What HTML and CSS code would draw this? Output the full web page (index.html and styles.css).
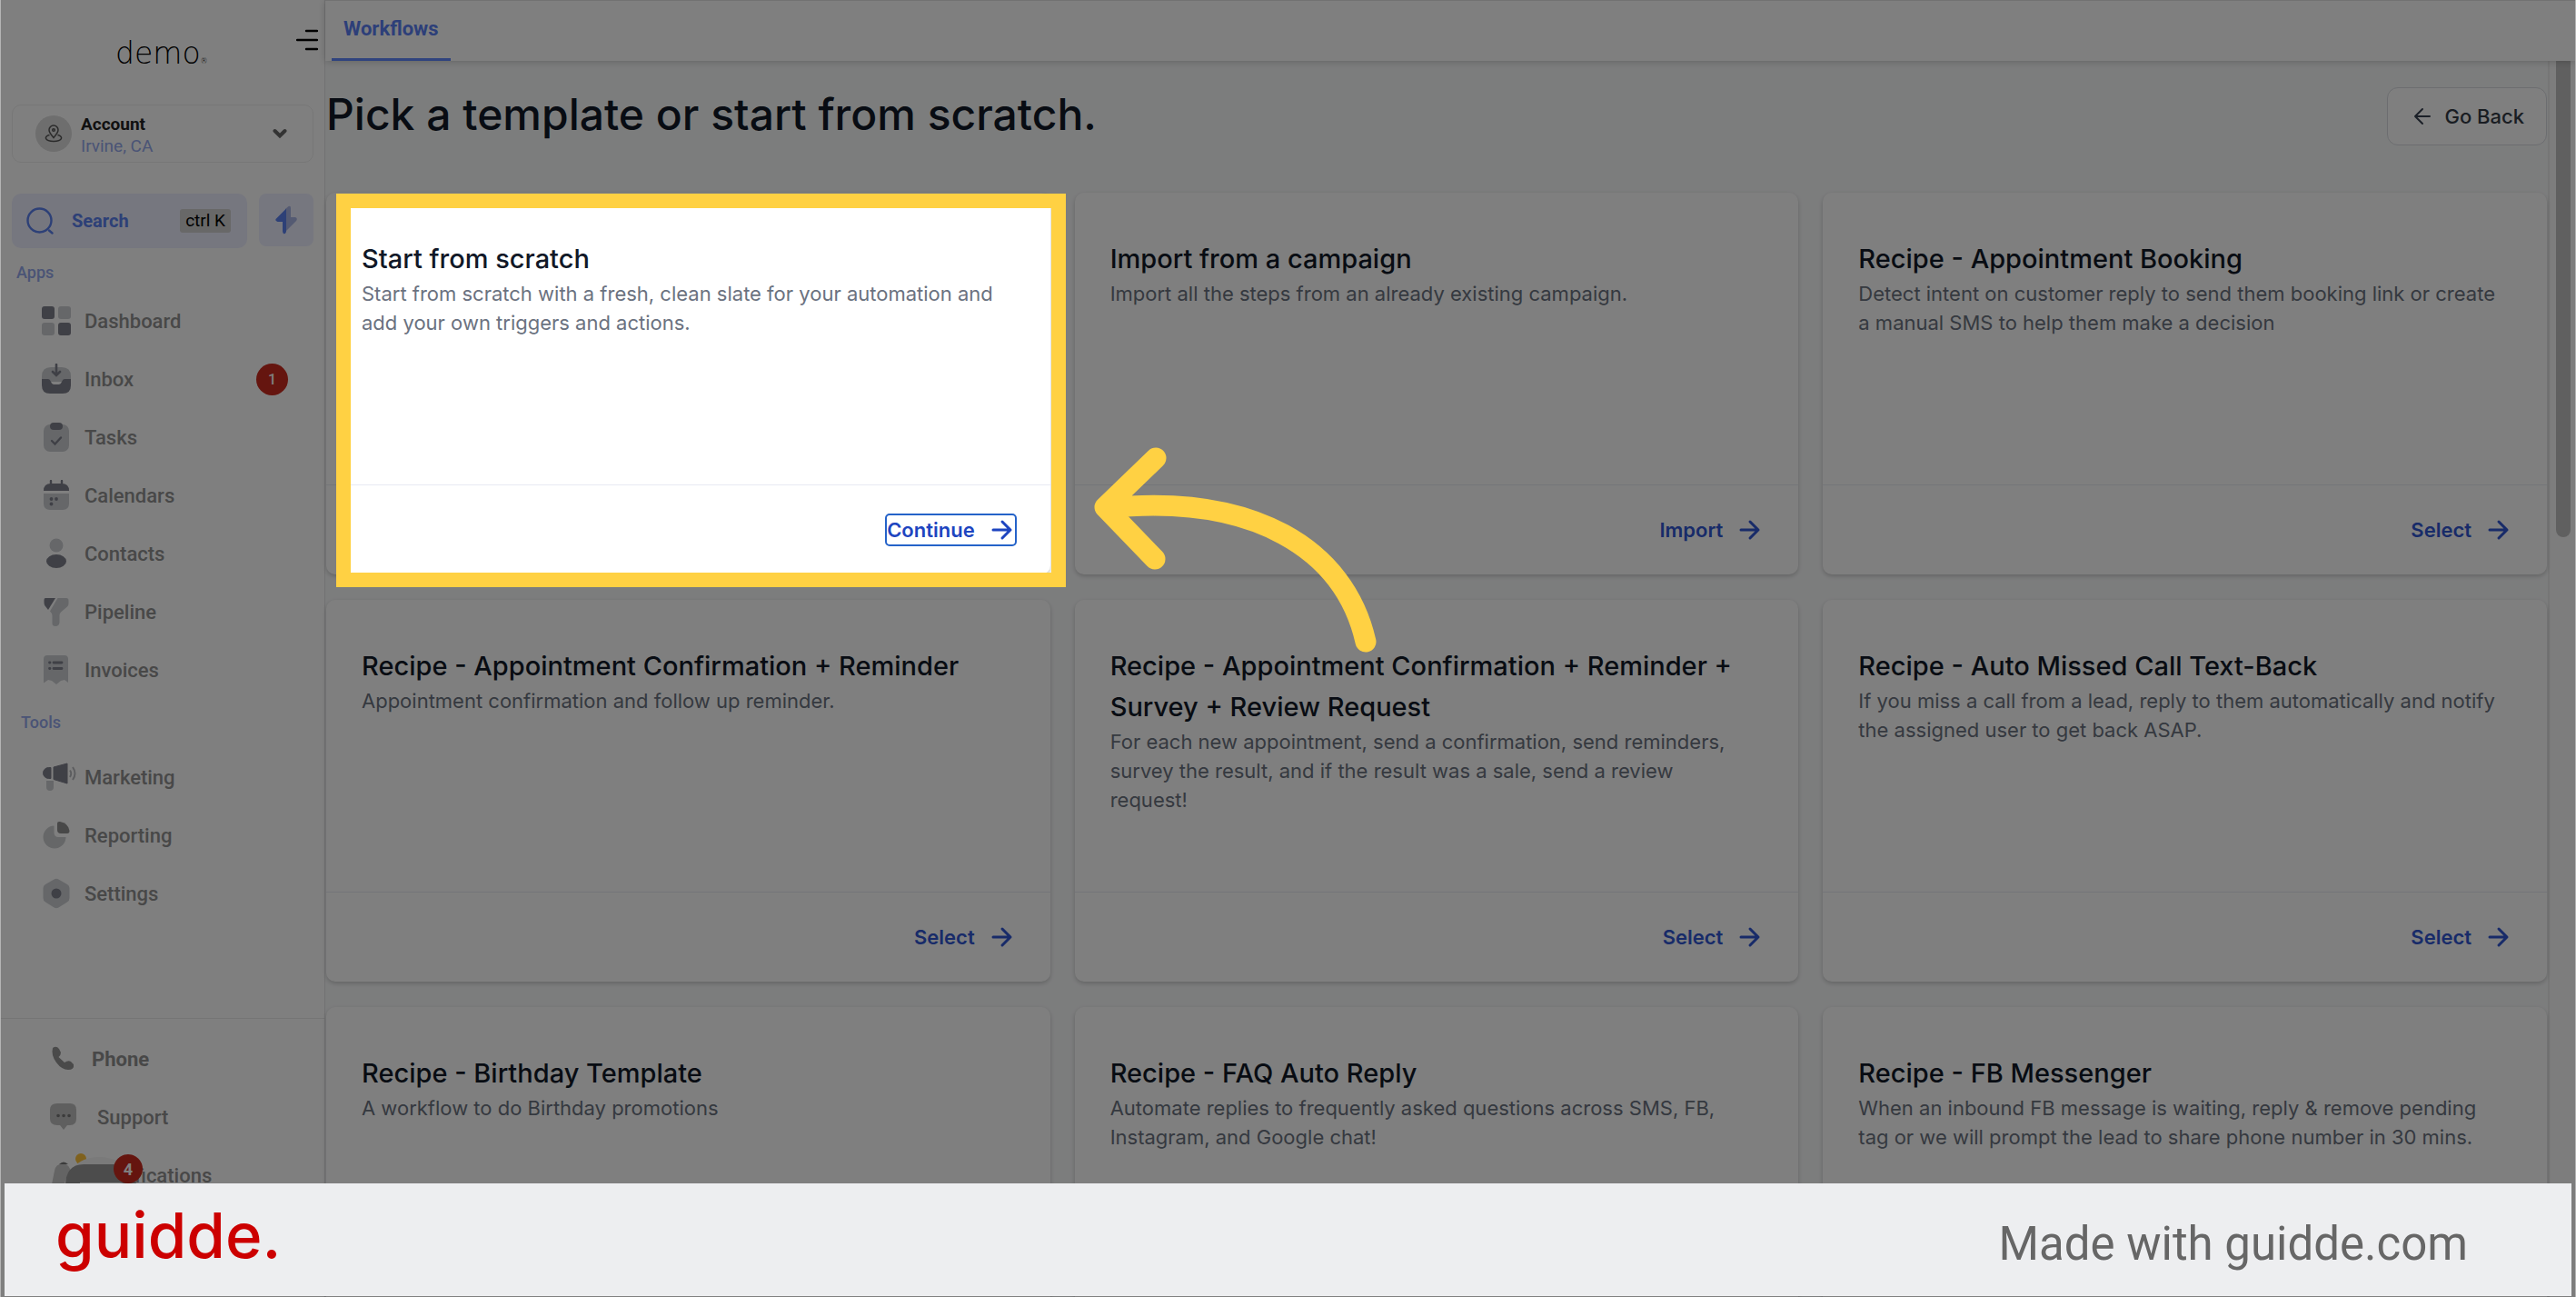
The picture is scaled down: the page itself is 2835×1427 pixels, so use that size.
FILE: index.html
```html
<!DOCTYPE html>
<html lang="en">
<head>
<meta charset="utf-8">
<meta name="viewport" content="width=device-width, initial-scale=1">
<title>Workflows</title>
<link rel="stylesheet" href="styles.css">
</head>
<body>
<svg class="sprite" aria-hidden="true">
  <symbol id="arrow-right" viewBox="0 0 30 32"><path d="M6 16H25M16 7L25 16L16 25" fill="none" stroke="currentColor" stroke-width="3" stroke-linecap="round" stroke-linejoin="round"/></symbol>
</svg>
<div class="app">
  <aside class="sidebar">
    <div class="brand">
      <span class="logo">demo<small>®</small></span>
      <button class="menu-toggle" aria-label="Toggle menu"><svg width="24" height="24" viewBox="0 0 24 24"><path d="M11 2H23M1 12H23M11 22H23" stroke="#000" stroke-width="2.4" stroke-linecap="round"/></svg></button>
    </div>
    <button class="account">
      <span class="avatar"><svg width="20" height="20" viewBox="0 0 20 20" fill="none" stroke="#555" stroke-width="1.5"><path d="M10 14.500C6.500 10.500 5 8.500 5 6a5 5 0 0 1 10 0c0 2.500-1.500 4.500-5 8.500z"/><circle cx="10" cy="6" r="1.300"/><path d="M5.500 11.500C-1 13 0 18.500 10 18.500S21 13 14.500 11.500"/></svg></span>
      <span class="account-text"><strong>Account</strong><span>Irvine, CA</span></span>
      <svg class="chevron" width="16" height="12" viewBox="0 0 16 12"><path d="M2.500 3L8 8.500L13.500 3" fill="none" stroke="#666" stroke-width="4" stroke-linecap="round"/></svg>
    </button>
    <div class="search-row">
      <button class="search"><svg width="30" height="30" viewBox="0 0 30 30" fill="none" stroke="#5a80ee" stroke-width="2.400" stroke-linecap="round"><circle cx="14.500" cy="14.500" r="13"/><path d="M25 25.500L28.500 28.500"/></svg><span>Search</span><kbd>ctrl K</kbd></button>
      <button class="quick" aria-label="Quick actions"><svg width="24" height="32" viewBox="0 0 24 32"><path d="M11 4L14.500 1Q17 0 17 3V13H22Q25 14 23 17L11 29z" fill="#a9b4e4"/><path d="M12 3.500V29Q11 32 9 31Q8 30 8 28V18H2.500Q-1 17 1 14.500z" fill="#5a80ee"/></svg></button>
    </div>
    <h2 class="group-label">Apps</h2>
    <nav class="nav" aria-label="Apps">
      <a href="#"><svg width="34" height="34" viewBox="0 0 34 34"><rect x="1" y="1" width="14" height="14" rx="3" fill="#7f808c"/><rect x="19" y="1" width="14" height="14" rx="3" fill="#cccfd3"/><rect x="1" y="19" width="14" height="14" rx="3" fill="#cccfd3"/><rect x="19" y="19" width="14" height="14" rx="3" fill="#7f808c"/></svg>Dashboard</a>
      <a href="#"><svg width="34" height="34" viewBox="0 0 34 34"><path d="M1 20V14Q1 4 11 4H23Q33 4 33 14V20z" fill="#cccfd3"/><path d="M1 17H8Q10 17 11 20Q12 23 14 23H20Q22 23 23 20Q24 17 26 17H33V24Q33 33 24 33H10Q1 33 1 24z" fill="#7f808c"/><path d="M17 1V12M13 9L17 13L21 9" fill="none" stroke="#7f808c" stroke-width="2.600" stroke-linecap="round"/></svg>Inbox<span class="count">1</span></a>
      <a href="#"><svg width="34" height="34" viewBox="0 0 34 34"><rect x="3" y="3" width="28" height="30" rx="7" fill="#cccfd3"/><rect x="10" y="1" width="14" height="8" rx="4" fill="#7f808c"/><path d="M12 21L15.500 24.500L22 17.500" fill="none" stroke="#7f808c" stroke-width="2.400" stroke-linecap="round"/></svg>Tasks</a>
      <a href="#"><svg width="34" height="34" viewBox="0 0 34 34"><path d="M3 15H31V26Q31 33 24 33H10Q3 33 3 26z" fill="#cccfd3"/><path d="M3 12Q3 4 11 4H23Q31 4 31 12z" fill="#7f808c"/><path d="M11 1V6M23 1V6" stroke="#7f808c" stroke-width="2.400" stroke-linecap="round"/><g fill="#7f808c"><circle cx="11.500" cy="21" r="1.900"/><circle cx="17" cy="21" r="1.900"/><circle cx="11.500" cy="26.500" r="1.900"/></g></svg>Calendars</a>
      <a href="#"><svg width="34" height="34" viewBox="0 0 34 34"><circle cx="17" cy="8" r="7.500" fill="#cccfd3"/><ellipse cx="17" cy="25.500" rx="11" ry="7.500" fill="#7f808c"/></svg>Contacts</a>
      <a href="#"><svg width="34" height="34" viewBox="0 0 34 34"><path d="M5 2H16L8 15L4.500 10.500Q3.500 9 3.500 7V4Q3.500 2 5 2z" fill="#7f808c"/><path d="M18.500 2H28Q30.500 2 30.500 4.500V8Q30.500 10 29 11.500L22 17.500Q20.500 19 20.500 21V29Q20 33 16 33Q12.500 33 12.500 30V21Q12.500 19 10 16.500z" fill="#cccfd3"/></svg>Pipeline</a>
      <a href="#"><svg width="34" height="34" viewBox="0 0 34 34"><path d="M3 5Q3 1 7 1H26Q30 1 30 5V31L26 28L22 29L17 33L12 29L8 28L3 31.500z" fill="#cccfd3"/><path d="M14 9H23M14 15.500H23M9.500 9H10M9.500 15.500H10" stroke="#7f808c" stroke-width="2.800" stroke-linecap="round"/></svg>Invoices</a>
    </nav>
    <h2 class="group-label tools">Tools</h2>
    <nav class="nav" aria-label="Tools">
      <a href="#"><svg width="42" height="34" viewBox="0 0 42 34"><path d="M11 6.500H8.500a6 6 0 0 0 0 12H11zM14 6L29 2V24L14 19.500z" fill="#7f808c" stroke="#7f808c" stroke-linejoin="round"/><path d="M6 21H14V28a4 4 0 0 1-8 0z" fill="#cccfd3"/><path d="M32 9.500Q34.500 13 32 17M35 6Q40 13 35 20" fill="none" stroke="#b9bbbf" stroke-width="2"/></svg>Marketing</a>
      <a href="#"><svg width="34" height="34" viewBox="0 0 34 34"><path d="M14.500 6.500V14Q14.500 19 19.500 19H27.500A12.500 12.500 0 1 1 14.500 6.500z" fill="#cccfd0"/><path d="M18 4Q18 1.500 21 2Q30 3.500 31.500 12Q31.500 15 29 15H22Q18 15 18 11z" fill="#909090"/></svg>Reporting</a>
      <a href="#"><svg width="34" height="34" viewBox="0 0 34 34"><path d="M14.500 1.500Q17 0 19.500 1.500L29 7Q31.500 8.500 31.500 11V22Q31.500 25 29 26.500L19.500 32.500Q17 34 14.500 32.500L5 26.500Q2.500 25 2.500 22V11Q2.500 8.500 5 7z" fill="#cccfd3"/><circle cx="17" cy="17" r="5.500" fill="#7f808c"/></svg>Settings</a>
    </nav>
    <nav class="nav nav-bottom" aria-label="Help">
      <a class="phone" href="#"><svg width="34" height="34" viewBox="0 0 34 34"><path d="M5 5Q9 2 12 6L14 10Q14 13 11.500 15L18 21Q22 18 25 20L28 23Q29 29 22 29Q15 29 9 21Q3 13 5 5z" fill="#949494"/></svg>Phone</a>
      <a class="wide" href="#"><svg width="34" height="34" viewBox="0 0 34 34"><path d="M10 2H24Q31 2 31 9V19Q31 26 24 26H21L17 31L13 26H10Q2 26 2 19V9Q2 2 10 2z" fill="#bfbfbf"/><path d="M11 15.500H11.100M17 15.500H17.100M23 15.500H23.100" stroke="#777" stroke-width="3.600" stroke-linecap="round"/></svg>Support</a>
      <a class="wide" href="#"><svg width="34" height="34" viewBox="0 0 34 34"><path d="M7 12Q8 5 16 4Q24 5 25 14L26 27H4z" fill="#c8c8c8"/><path d="M12 5Q17 0 22 5z" fill="#777"/></svg>Notifications</a>
      <svg class="chat" width="120" height="72" viewBox="0 0 120 72"><circle cx="39" cy="14" r="6" fill="#ffc23a"/><path d="M17 60Q22 12 59 12Q84 12 100 34V60z" fill="#f4f4f4"/><path d="M22 60V44Q22 20 42 20H82Q100 22 100 44V60H88V46Q88 40 82 40H38V60z" fill="#999"/></svg>
      <span class="count chat-count">4</span>
    </nav>
  </aside>

  <div class="main">
    <header class="topbar"><a class="tab" href="#">Workflows</a></header>
    <div class="viewport">
      <main class="content">
        <div class="heading">
          <h1>Pick a template or start from scratch.</h1>
          <button class="back"><svg width="20" height="20" viewBox="0 0 20 20" fill="none" stroke="#374151" stroke-width="2" stroke-linecap="round" stroke-linejoin="round"><path d="M18 10H2M10 2L2 10L10 18"/></svg>Go Back</button>
        </div>
        <div class="cards">
          <article class="card">
            <div class="card-body"><h3>Start from scratch</h3><p>Start from scratch with a fresh, clean slate for your automation and add your own triggers and actions.</p></div>
            <footer><button class="focused">Continue<svg><use href="#arrow-right"/></svg></button></footer>
            <div class="spotlight"></div>
            <svg class="pointer" width="320" height="232" viewBox="0 0 320 232" fill="none" stroke="#ffd143" stroke-width="23" stroke-linecap="round" stroke-linejoin="round"><path d="M72 16L16 70L71 127M17 71C180 54 280 116 303 218"/></svg>
          </article>
          <article class="card">
            <div class="card-body"><h3>Import from a campaign</h3><p>Import all the steps from an already existing campaign.</p></div>
            <footer><button>Import<svg><use href="#arrow-right"/></svg></button></footer>
          </article>
          <article class="card">
            <div class="card-body"><h3>Recipe - Appointment Booking</h3><p>Detect intent on customer reply to send them booking link or create a manual SMS to help them make a decision</p></div>
            <footer><button>Select<svg><use href="#arrow-right"/></svg></button></footer>
          </article>
          <article class="card">
            <div class="card-body"><h3>Recipe - Appointment Confirmation + Reminder</h3><p>Appointment confirmation and follow up reminder.</p></div>
            <footer><button>Select<svg><use href="#arrow-right"/></svg></button></footer>
          </article>
          <article class="card">
            <div class="card-body"><h3>Recipe - Appointment Confirmation + Reminder + Survey + Review Request</h3><p>For each new appointment, send a confirmation, send reminders, survey the result, and if the result was a sale, send a review request!</p></div>
            <footer><button>Select<svg><use href="#arrow-right"/></svg></button></footer>
          </article>
          <article class="card">
            <div class="card-body"><h3>Recipe - Auto Missed Call Text-Back</h3><p>If you miss a call from a lead, reply to them automatically and notify the assigned user to get back ASAP.</p></div>
            <footer><button>Select<svg><use href="#arrow-right"/></svg></button></footer>
          </article>
          <article class="card">
            <div class="card-body"><h3>Recipe - Birthday Template</h3><p>A workflow to do Birthday promotions</p></div>
          </article>
          <article class="card">
            <div class="card-body"><h3>Recipe - FAQ Auto Reply</h3><p>Automate replies to frequently asked questions across SMS, FB, Instagram, and Google chat!</p></div>
          </article>
          <article class="card">
            <div class="card-body"><h3>Recipe - FB Messenger</h3><p>When an inbound FB message is waiting, reply &amp; remove pending tag or we will prompt the lead to share phone number in 30 mins.</p></div>
          </article>
        </div>
      </main>
      <div class="scroll-track"><div class="scroll-thumb"></div></div>
    </div>
  </div>
</div>
<div class="banner"><span class="banner-logo">guidde.</span><span class="banner-text">Made with guidde.com</span></div>
</body>
</html>
```
FILE: styles.css
```css
* { box-sizing: border-box; }
body { margin: 0; padding: 0 1px; height: 100vh; overflow: hidden; background: #b4b4b4; font-family: Roboto, sans-serif; }
h1, h2, h3, p { margin: 0; }
button { font: inherit; border: 0; padding: 0; background: none; cursor: pointer; }
a { color: inherit; text-decoration: none; }
svg { flex: none; display: block; }
.sprite { position: absolute; width: 0; height: 0; }

.app { display: grid; grid-template-columns: 357px 1fr; height: 100vh; overflow: hidden; position: relative; }

/* Sidebar */
.sidebar { display: flex; flex-direction: column; height: 100vh; background: #fff; border-right: 1px solid #e3e3e5; }
.brand { display: flex; justify-content: flex-end; height: 115px; padding: 32px 7px 0 0; }
.logo { flex: 1; padding-left: 126px; font: 200 33px/54px "DejaVu Sans", sans-serif; color: #000; }
.logo small { font-size: 8px; }
.menu-toggle { height: 24px; }
.account { display: flex; align-items: center; height: 64px; margin: 0 12px; padding: 0 28px 0 25px; border: 1px solid #eee; border-radius: 10px; text-align: left; font-size: 19px; line-height: 24px; }
.avatar { display: grid; place-items: center; width: 40px; height: 40px; border-radius: 50%; background: #dcdcdc; margin-right: 10px; }
.account-text { display: flex; flex-direction: column; padding-top: 4px; color: #94a8ec; }
.account-text strong { font-weight: 700; color: #222; }
.chevron { margin-left: auto; }
.search-row { display: flex; gap: 13px; margin: 34px 12px 0; }
.search { flex: 1; display: flex; align-items: center; height: 60px; padding: 0 18px 0 16px; border-radius: 10px; background: #edeefe; color: #5a80ee; font-size: 20px; font-weight: 700; }
.search span { margin-left: 20px; }
.search kbd { margin-left: auto; padding: 0 6px; border-radius: 3px; background: #d0d0d0; color: #000; font: 400 19px/26px Roboto, sans-serif; }
.quick { display: grid; place-items: center; width: 60px; height: 58px; border-radius: 8px; background: #edeefe; }
.group-label { padding-left: 17px; margin-top: 15px; font-size: 18px; line-height: 24px; font-weight: 500; color: #94a8ec; }
.group-label.tools { padding-left: 22px; margin-top: 14px; }
.nav { display: flex; flex-direction: column; padding-top: 9px; color: #919191; font-size: 22px; font-weight: 500; }
.group-label.tools + .nav { padding-top: 16px; }
.nav a { display: flex; align-items: center; height: 64px; padding: 0 40px 0 44px; gap: 14px; }
.nav svg[width="42"] { margin-right: -8px; }
.count { display: grid; place-items: center; width: 35px; height: 35px; margin-left: auto; border-radius: 50%; background: #ca2a1e; color: #fff; font-size: 16px; font-weight: 500; }
.nav.nav-bottom { position: relative; margin-top: auto; padding: 12px 0 102px; border-top: 1px solid #eaeaea; }
.nav-bottom .phone { padding-left: 52px; font-weight: 700; font-size: 22px; }
.nav-bottom .wide { padding-left: 52px; gap: 20px; }
.chat { position: absolute; left: 49px; top: 140px; }
.nav-bottom .chat-count { position: absolute; left: 124px; top: 149px; width: 32px; height: 32px; font-size: 18px; font-weight: 700; }

/* Main column */
.main { display: flex; flex-direction: column; height: 100vh; min-width: 0; }
.topbar { display: flex; flex: none; position: relative; height: 67px; padding-left: 7px; background: #fff; border-top: 1px solid #e5e5e5; box-shadow: 0 1px 8px rgba(0, 0, 0, .2); }
.tab { padding: 0 13px; border-bottom: 3px solid #6086fc; color: #5a7ff2; font-size: 22px; line-height: 61px; font-weight: 700; }
.viewport { display: flex; flex: 1; min-height: 0; background: #f9fafb; }
.content { flex: 1; min-width: 0; padding: 29px 1px 0; border-right: 2px solid #ececec; font-family: Inter, sans-serif; }
.heading { display: flex; justify-content: space-between; align-items: center; margin-bottom: 52px; }
h1 { padding-bottom: 4px; font-size: 48px; line-height: 60px; font-weight: 500; color: #111827; }
.back { display: flex; align-items: center; gap: 14px; height: 64px; padding: 0 24px 0 28px; border: 1px solid #d8dbe0; border-radius: 12px; background: #fff; color: #333a45; font-size: 22px; font-weight: 500; }
.cards { display: grid; grid-template-columns: repeat(3, 1fr); gap: 28px 27px; }
.card { position: relative; display: flex; flex-direction: column; min-height: 420px; border-radius: 10px; background: #fff; box-shadow: 0 2px 5px rgba(0, 0, 0, .2); }
.card-body { flex: 1; padding: 50px 39px 0; }
h3 { font-size: 29px; line-height: 45px; font-weight: 500; color: #111827; }
p { padding-right: 12px; font-size: 22px; line-height: 32px; color: #6b7280; }
.card footer { display: flex; justify-content: flex-end; align-items: center; height: 99px; padding-right: 39px; border-top: 1px solid #e8eaf2; }
.card footer button { display: flex; align-items: center; gap: 14px; height: 32px; font-size: 22px; font-weight: 600; color: #3056d3; border-radius: 3px; }
.card footer svg { width: 30px; height: 32px; }
.card footer .focused { color: #1e45c0; outline: 2px solid #2563c9; }
.scroll-track { flex: none; width: 28px; padding-left: 7px; background: #fafafa; }
.scroll-thumb { width: 16px; height: 524px; border-radius: 0 0 8px 8px; background: #c1c1c1; }

/* Step highlight over the first card */
.spotlight { position: absolute; z-index: 10; inset: 1px -17px -14px 11px; border: 16px solid #ffd143; box-shadow: 0 0 0 4000px rgba(0, 0, 0, .5); pointer-events: none; }
.pointer { position: absolute; z-index: 11; left: 841px; top: 276px; overflow: visible; }

/* Attribution banner */
.banner { position: fixed; z-index: 20; left: 5px; right: 5px; bottom: 1px; display: flex; justify-content: space-between; align-items: center; height: 124px; padding: 0 114px 0 56px; background: #edeef0; }
.banner-logo { padding-bottom: 10px; font: 500 69px/80px Inter, sans-serif; color: #c00; }
.banner-text { padding-top: 10px; font-size: 51px; line-height: 60px; color: #666; }
```
